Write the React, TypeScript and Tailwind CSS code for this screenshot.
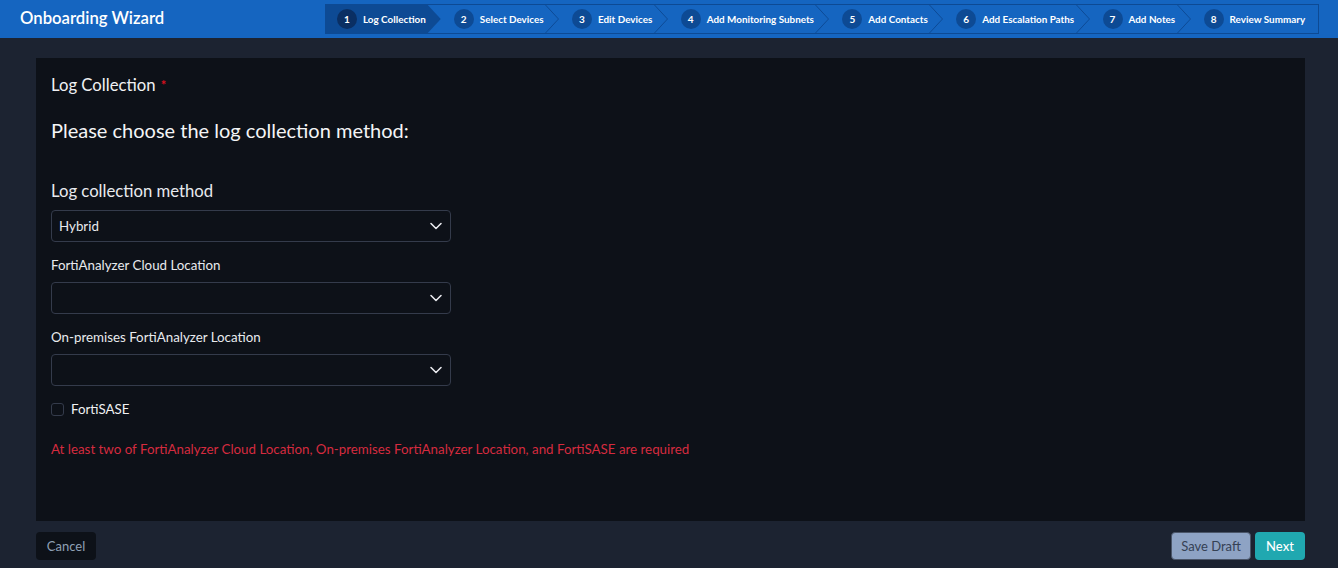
import React from 'react';
import { ChevronDown } from 'lucide-react';

const steps = [
  'Log Collection',
  'Select Devices',
  'Edit Devices',
  'Add Monitoring Subnets',
  'Add Contacts',
  'Add Escalation Paths',
  'Add Notes',
  'Review Summary',
];

const Step = ({ label, num }: { label: string; num: number }) => {
  const active = num === 1;
  const last = num === steps.length;
  const box = active
    ? 'pl-[11px] pr-[15px] bg-[#0d4a94] [clip-path:polygon(0_0,calc(100%-13px)_0,100%_50%,calc(100%-13px)_100%,0_100%)]'
    : last
      ? 'flex-1 pl-[13px]'
      : 'pl-[13px] pr-[15.4px]';
  return (
    <div className={`relative h-full flex items-center gap-[6px] ${box}`}>
      <span className={`w-5 h-5 rounded-full flex items-center justify-center text-[10px] font-bold text-white ${active ? 'bg-[#0a2f63]' : 'bg-[#0d4a94]'}`}>
        {num}
      </span>
      <span className="text-[9.9px] font-bold text-white whitespace-nowrap">{label}</span>
      {!last && !active && (
        <svg className="absolute right-0 top-0 h-full w-[14px]" viewBox="0 0 14 30" preserveAspectRatio="none" fill="none">
          <path d="M0.5 0L13.5 15L0.5 30" stroke="#0d4a94" strokeWidth="1" />
        </svg>
      )}
    </div>
  );
};

const Select = ({ value }: { value?: string }) => (
  <div className="w-[400px] h-8 rounded border border-[#343b4b] bg-[#0d1118] flex items-center justify-between pl-[7px] pr-1 text-[13.33px] text-[#e8eaee]">
    <span className="pt-px">{value}</span>
    <ChevronDown size={20} strokeWidth={1.9} className="text-[#e8eaee]" />
  </div>
);

export default function App() {
  return (
    <div className="h-[568px] flex flex-col bg-[#1c2331] overflow-hidden font-['Lato',sans-serif]">
      <header className="h-[38px] bg-[#1565c0] flex items-start justify-between pl-5 pr-[19px]">
        <h1 className="text-[16.7px] leading-[36px] font-semibold text-white">Onboarding Wizard</h1>
        <nav className="mt-1 h-[30px] w-[994px] flex border border-[#0d4a94]">
          {steps.map((s, i) => (
            <Step key={s} label={s} num={i + 1} />
          ))}
        </nav>
      </header>

      <main className="mt-5 mx-[33px] ml-9 h-[463px] bg-[#0d1118] px-[15px] pt-4 text-white">
        <div className="text-[16.7px] leading-[22px] text-[#f0f1f3]">
          Log Collection <span className="ml-px text-[13px] font-bold align-top text-[#d90f1e]">*</span>
        </div>
        <h2 className="mt-[22px] text-[20px] leading-6 text-[#f4f5f6]">Please choose the log collection method:</h2>
        <div className="mt-[37px] text-[16.7px] leading-[24px] text-[#e8eaee]">Log collection method</div>
        <div className="mt-[7px]">
          <Select value="Hybrid" />
        </div>
        <div className="mt-[14px] text-[13.33px] leading-[18px] text-[#e8eaee]">FortiAnalyzer Cloud Location</div>
        <div className="mt-[8px]">
          <Select />
        </div>
        <div className="mt-[14px] text-[13.33px] leading-[18px] text-[#e8eaee]">On-premises FortiAnalyzer Location</div>
        <div className="mt-[8px]">
          <Select />
        </div>
        <label className="mt-[14px] flex items-center gap-[7px] text-[13.33px] leading-[18px] text-[#f0f1f3]">
          <span className="w-[13px] h-[13px] rounded-[3px] border border-[#343b4b]" />
          FortiSASE
        </label>
        <p className="mt-[22px] text-[13.33px] leading-[18px] text-[#d52b3f]">
          At least two of FortiAnalyzer Cloud Location, On-premises FortiAnalyzer Location, and FortiSASE are required
        </p>
      </main>

      <footer className="mt-[11px] ml-9 mr-[33px] flex justify-between text-[13px]">
        <button className="w-[60px] h-7 pt-px rounded bg-[#0d1118] text-[#8fa0b5]">Cancel</button>
        <div className="flex gap-1">
          <button className="w-[80px] h-7 pt-px rounded border border-[#4a5568] bg-[#8ea3c4] text-[#354154]">Save Draft</button>
          <button className="w-[50px] h-7 pt-px rounded bg-[#20a8b0] font-medium text-white">Next</button>
        </div>
      </footer>
    </div>
  );
}
